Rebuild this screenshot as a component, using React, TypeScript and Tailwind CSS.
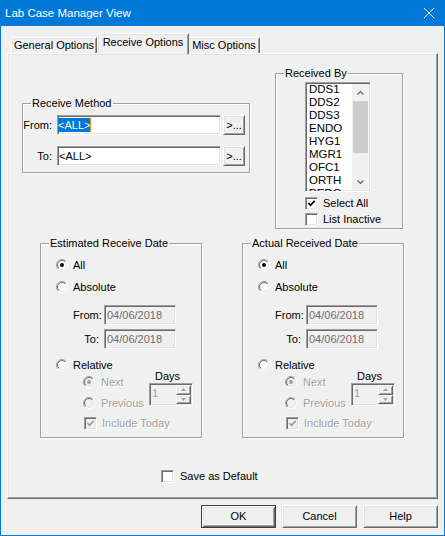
import React, { useId } from "react";

const sunken =
  "border border-t-[#a0a0a0] border-l-[#a0a0a0] border-r-white border-b-white shadow-[inset_1px_1px_0_#696969,inset_-1px_-1px_0_#e3e3e3]";
const raised =
  "border border-t-white border-l-white border-r-[#696969] border-b-[#696969] shadow-[inset_1px_1px_0_#e3e3e3,inset_-1px_-1px_0_#a0a0a0] bg-[#f0f0f0]";
const disabledText = "text-[#a0a0a0] [text-shadow:1px_1px_0_#ffffff]";

function Radio({ checked, disabled }: { checked?: boolean; disabled?: boolean }) {
  const id = useId().replace(/:/g, "");
  return (
    <svg width="12" height="12" viewBox="0 0 12 12" className="shrink-0">
      <defs>
        <linearGradient id={`o${id}`} x1="0" y1="0" x2="1" y2="1">
          <stop offset="0.5" stopColor="#a0a0a0" />
          <stop offset="0.5" stopColor="#ffffff" />
        </linearGradient>
        <linearGradient id={`i${id}`} x1="0" y1="0" x2="1" y2="1">
          <stop offset="0.5" stopColor="#696969" />
          <stop offset="0.5" stopColor="#e3e3e3" />
        </linearGradient>
      </defs>
      <circle cx="6" cy="6" r="5.5" fill="none" stroke={`url(#o${id})`} strokeWidth="1" />
      <circle cx="6" cy="6" r="4.5" fill={disabled ? "#f0f0f0" : "#ffffff"} stroke={`url(#i${id})`} strokeWidth="1" />
      {checked && <circle cx="6" cy="6" r="2" fill={disabled ? "#a0a0a0" : "#000000"} />}
    </svg>
  );
}

function Check({ checked, disabled }: { checked?: boolean; disabled?: boolean }) {
  return (
    <div
      className={`w-[13px] h-[13px] shrink-0 flex items-center justify-center ${sunken} ${
        disabled ? "bg-[#f0f0f0]" : "bg-white"
      }`}
    >
      {checked && (
        <svg width="9" height="9" viewBox="0 0 9 9">
          <path
            d="M1.3 4 L3.5 6.3 L7.7 1.8"
            fill="none"
            stroke={disabled ? "#a0a0a0" : "#000000"}
            strokeWidth="1.8"
          />
        </svg>
      )}
    </div>
  );
}

function Group({
  title,
  className,
  children,
}: {
  title: string;
  className: string;
  children?: React.ReactNode;
}) {
  return (
    <div className={`relative shrink-0 border border-[#a0a0a0] shadow-[inset_1px_1px_0_#fff,1px_1px_0_#fff] ${className}`}>
      <span className="absolute left-[8px] -top-[7px] px-[1px] bg-[#f0f0f0] leading-[13px] whitespace-nowrap">
        {title}
      </span>
      {children}
    </div>
  );
}

function Tri({ up }: { up?: boolean }) {
  return (
    <svg width="5" height="3" viewBox="0 0 5 3">
      <path d={up ? "M0 3 L2.5 0 L5 3 Z" : "M0 0 L2.5 3 L5 0 Z"} fill="#a0a0a0" />
    </svg>
  );
}

function DateGroup({ title, className }: { title: string; className: string }) {
  return (
    <Group title={title} className={className}>
      <div className="flex flex-col">
        <div className="mt-[14px] ml-[15px] h-[14px] flex items-center gap-[5px]">
          <Radio checked />
          <span>All</span>
        </div>
        <div className="mt-[8px] ml-[15px] h-[14px] flex items-center gap-[5px]">
          <Radio />
          <span>Absolute</span>
        </div>
        <div className="mt-[11px] ml-[32px] h-[20px] flex items-center">
          <span className="w-[26px] mr-[5px] text-right">From:</span>
          <div className={`w-[72px] h-[20px] pl-[2px] flex items-center bg-[#f0f0f0] text-[#6d6d6d] ${sunken}`}>
            04/06/2018
          </div>
        </div>
        <div className="mt-[4px] ml-[32px] h-[20px] flex items-center">
          <span className="w-[26px] mr-[5px] text-right">To:</span>
          <div className={`w-[72px] h-[20px] pl-[2px] flex items-center bg-[#f0f0f0] text-[#6d6d6d] ${sunken}`}>
            04/06/2018
          </div>
        </div>
        <div className="mt-[9px] ml-[15px] h-[14px] flex items-center gap-[5px]">
          <Radio />
          <span>Relative</span>
        </div>
        <div className="-mt-[2px] ml-[42px] flex">
          <div className="w-[66px] flex flex-col">
            <div className="mt-[4px] h-[16px] flex items-center gap-[6px]">
              <Radio checked disabled />
              <span className={disabledText}>Next</span>
            </div>
            <div className="mt-[5px] h-[16px] flex items-center gap-[6px]">
              <Radio disabled />
              <span className={disabledText}>Previous</span>
            </div>
          </div>
          <div className="flex flex-col">
            <span className="h-[13px] leading-[13px] pl-[6px]">Days</span>
            <div className={`w-[44px] h-[23px] flex bg-[#f0f0f0] ${sunken}`}>
              <span className="flex-1 pl-[2px] pt-[3px] text-[#a0a0a0]">1</span>
              <div className="w-[15px] flex flex-col my-[1px] mr-[1px]">
                <div className={`flex-1 flex items-center justify-center ${raised}`}>
                  <Tri up />
                </div>
                <div className={`flex-1 flex items-center justify-center ${raised}`}>
                  <Tri />
                </div>
              </div>
            </div>
          </div>
        </div>
        <div className="mt-[4px] ml-[43px] h-[16px] flex items-center gap-[5px]">
          <Check checked disabled />
          <span className={disabledText}>Include Today</span>
        </div>
      </div>
    </Group>
  );
}

function Chevron({ up }: { up?: boolean }) {
  return (
    <svg width="7" height="4" viewBox="0 0 7 4">
      <path
        d={up ? "M0.5 3.5 L3.5 0.6 L6.5 3.5" : "M0.5 0.5 L3.5 3.4 L6.5 0.5"}
        fill="none"
        stroke="#606060"
        strokeWidth="1.2"
      />
    </svg>
  );
}

const items = ["DDS1", "DDS2", "DDS3", "ENDO", "HYG1", "MGR1", "OFC1", "ORTH", "PEDO"];

export default function App() {
  return (
    <div className="w-[445px] h-[536px] bg-[#0078d7] px-[1px] pb-[1px] flex flex-col font-['Liberation_Sans',Arial,sans-serif] text-[11px] leading-[13px] text-black whitespace-nowrap select-none">
      <div className="h-[26px] shrink-0 flex items-center justify-between pl-[4px] pr-[10px] text-white text-[11.5px]">
        <span>Lab Case Manager View</span>
        <svg width="10" height="10" viewBox="0 0 10 10">
          <path d="M0 0 L10 10 M10 0 L0 10" stroke="#ffffff" strokeWidth="1" />
        </svg>
      </div>
      <div className="flex-1 bg-[#f0f0f0] flex flex-col">
        <div className="mt-[7px] ml-[10px] h-[20px] flex items-end">
          <div className="w-[86px] h-[16px] flex items-center justify-center border-t border-l border-r border-t-white border-l-white border-r-[#696969] shadow-[inset_1px_1px_0_#e3e3e3,inset_-1px_0_0_#a0a0a0]">
            General Options
          </div>
          <div className="relative z-10 w-[92px] h-[21px] -mb-[1px] bg-[#f0f0f0] flex items-start justify-center pt-[2px] border-t border-l border-r border-t-white border-l-white border-r-[#696969] shadow-[inset_1px_1px_0_#e3e3e3,inset_-1px_0_0_#a0a0a0]">
            Receive Options
          </div>
          <div className="w-[71px] h-[16px] flex items-center justify-center border-t border-r border-t-white border-r-[#696969] shadow-[inset_0_1px_0_#e3e3e3,inset_-1px_0_0_#a0a0a0]">
            Misc Options
          </div>
        </div>
        <div className="ml-[6px] w-[431px] h-[446px] shrink-0 flex flex-col border border-t-white border-l-white border-r-[#696969] border-b-[#696969] shadow-[inset_-1px_-1px_0_#a0a0a0,inset_1px_1px_0_#e3e3e3]">
          <div className="flex items-start">
            <Group title="Receive Method" className="ml-[14px] mt-[49px] w-[228px] h-[70px]">
              <div className="mt-[11px] h-[20px] flex items-center">
                <span className="w-[29px] mr-[5px] text-right">From:</span>
                <div className={`w-[164px] h-[20px] flex items-center bg-white ${sunken}`}>
                  <span className="h-[14px] leading-[14px] bg-[#0078d7] text-white">&lt;ALL&gt;</span>
                  <span className="w-[1px] h-[14px] bg-[#ff8c00]" />
                </div>
                <div className={`ml-[2px] w-[22px] h-[20px] flex items-center justify-center ${raised}`}>
                  &gt;...
                </div>
              </div>
              <div className="mt-[11px] h-[20px] flex items-center">
                <span className="w-[29px] mr-[5px] text-right">To:</span>
                <div className={`w-[164px] h-[20px] pl-[1px] flex items-center bg-white ${sunken}`}>
                  &lt;ALL&gt;
                </div>
                <div className={`ml-[2px] w-[22px] h-[20px] flex items-center justify-center ${raised}`}>
                  &gt;...
                </div>
              </div>
            </Group>
            <Group title="Received By" className="ml-[25px] mt-[19px] w-[128px] h-[156px]">
              <div className={`ml-[29px] mt-[8px] w-[66px] h-[110px] flex bg-white ${sunken}`}>
                <div className="flex-1 overflow-hidden ml-[1px]">
                  {items.map((t) => (
                    <div key={t} className="h-[13px] leading-[13px] pl-[2px] text-[11.5px]">
                      {t}
                    </div>
                  ))}
                </div>
                <div className="w-[17px] my-[1px] mr-[1px] flex flex-col bg-[#f0f0f0]">
                  <div className="h-[17px] flex items-center justify-center">
                    <Chevron up />
                  </div>
                  <div className="h-[52px] mx-[1px] bg-[#cdcdcd]" />
                  <div className="flex-1" />
                  <div className="h-[17px] flex items-center justify-center">
                    <Chevron />
                  </div>
                </div>
              </div>
              <div className="mt-[5px] ml-[29px] h-[13px] flex items-center gap-[5px]">
                <Check checked />
                <span>Select All</span>
              </div>
              <div className="mt-[3px] ml-[29px] h-[13px] flex items-center gap-[5px]">
                <Check />
                <span>List Inactive</span>
              </div>
            </Group>
          </div>
          <div className="mt-[14px] flex">
            <DateGroup title="Estimated Receive Date" className="ml-[32px] w-[162px] h-[195px]" />
            <DateGroup title="Actual Received Date" className="ml-[40px] w-[162px] h-[195px]" />
          </div>
          <div className="mt-[32px] ml-[153px] h-[13px] flex items-center gap-[6px]">
            <Check />
            <span>Save as Default</span>
          </div>
        </div>
        <div className="mt-[6px] pr-[6px] flex justify-end gap-[6px]">
          <div className="w-[75px] h-[23px] flex items-center justify-center bg-[#f0f0f0] border border-[#3c3c3c] shadow-[inset_1px_1px_0_#fff,inset_-1px_-1px_0_#696969,inset_2px_2px_0_#e3e3e3,inset_-2px_-2px_0_#a0a0a0]">
            OK
          </div>
          <div className={`w-[75px] h-[23px] flex items-center justify-center ${raised}`}>Cancel</div>
          <div className={`w-[75px] h-[23px] flex items-center justify-center ${raised}`}>Help</div>
        </div>
      </div>
    </div>
  );
}
